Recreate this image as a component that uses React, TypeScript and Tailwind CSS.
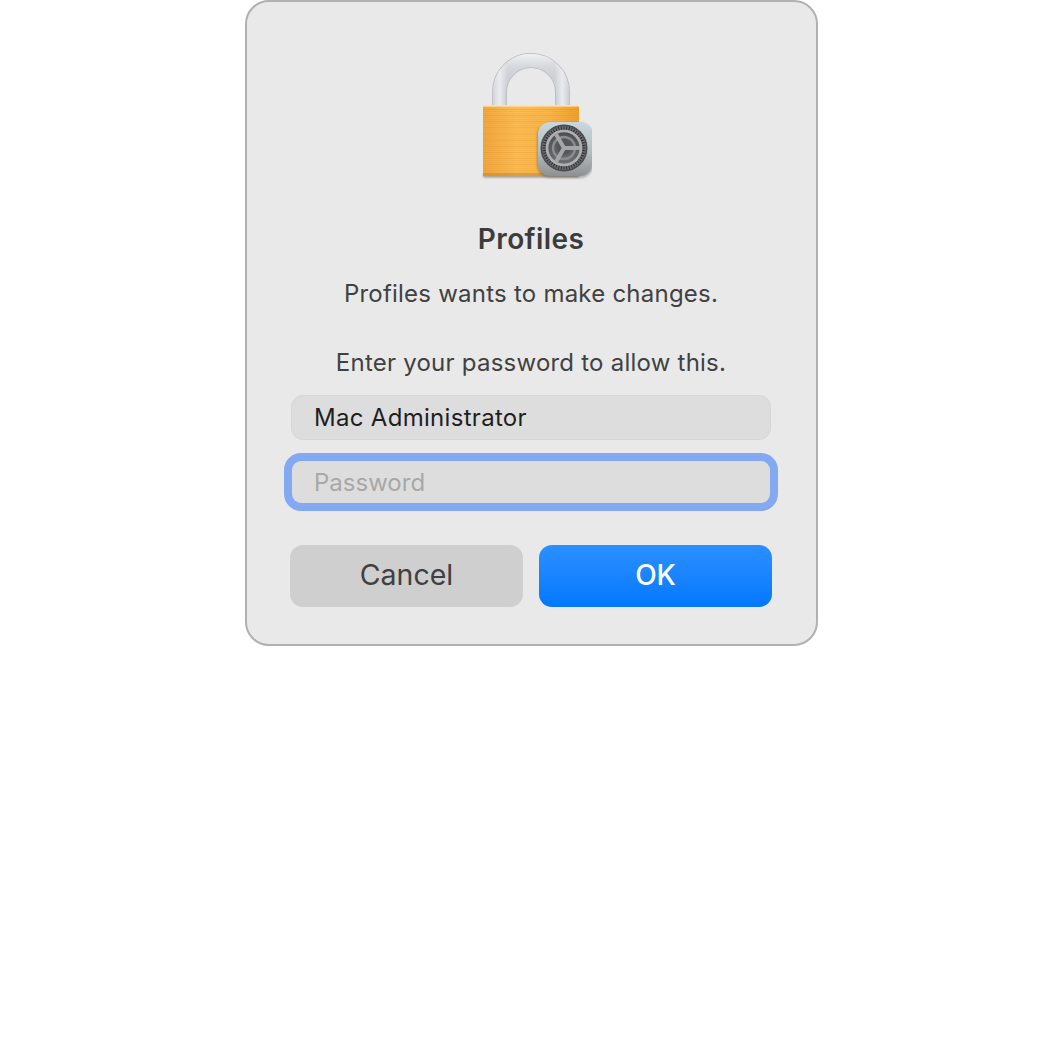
function LockIcon() {
  const teeth = Array.from({ length: 48 }, (_, i) => i * 7.5);
  return (
    <svg width="122" height="135" viewBox="-2 0 122 135" className="block">
      <defs>
        <linearGradient id="shackle" gradientUnits="userSpaceOnUse" x1="20" y1="0" x2="98" y2="0">
          <stop offset="0" stopColor="#cfd1d5" />
          <stop offset="0.1" stopColor="#eceef1" />
          <stop offset="0.2" stopColor="#c3c6cc" />
          <stop offset="0.8" stopColor="#c3c6cc" />
          <stop offset="0.9" stopColor="#eceef1" />
          <stop offset="1" stopColor="#c6c9ce" />
        </linearGradient>
        <linearGradient id="shackleTop" gradientUnits="userSpaceOnUse" x1="0" y1="3" x2="0" y2="55">
          <stop offset="0" stopColor="#f9f9fa" stopOpacity="0.9" />
          <stop offset="0.3" stopColor="#e8e9eb" stopOpacity="0.45" />
          <stop offset="1" stopColor="#d5d7da" stopOpacity="0" />
        </linearGradient>
        <linearGradient id="body" x1="0" y1="0" x2="1" y2="0">
          <stop offset="0" stopColor="#f2a73d" />
          <stop offset="0.35" stopColor="#fdbd55" />
          <stop offset="0.7" stopColor="#fab548" />
          <stop offset="1" stopColor="#ee9f30" />
        </linearGradient>
        <linearGradient id="badge" x1="0" y1="0" x2="0" y2="1">
          <stop offset="0" stopColor="#c8d8dc" />
          <stop offset="0.55" stopColor="#b4bdc0" />
          <stop offset="1" stopColor="#8f9192" />
        </linearGradient>
        <linearGradient id="disc" x1="0" y1="0" x2="0" y2="1">
          <stop offset="0" stopColor="#4b4d50" />
          <stop offset="1" stopColor="#6d6f72" />
        </linearGradient>
        <filter id="soft" x="-10%" y="-10%" width="120%" height="120%">
          <feGaussianBlur stdDeviation="0.4" />
        </filter>
        <filter id="drop" x="-20%" y="-20%" width="140%" height="140%">
          <feGaussianBlur stdDeviation="1.2" />
        </filter>
      </defs>
      <g filter="url(#soft)">
        <path d="M27.5 56V42A31.5 31.5 0 0 1 90.5 42V56" fill="none" stroke="#b6b8bd" strokeWidth="15" />
        <path d="M27.5 56V42A31.5 31.5 0 0 1 90.5 42V56" fill="none" stroke="url(#shackle)" strokeWidth="13.6" />
        <path d="M27.5 56V42A31.5 31.5 0 0 1 90.5 42V56" fill="none" stroke="url(#shackleTop)" strokeWidth="13.6" />
        <rect x="11" y="124" width="96" height="3.5" rx="1.5" fill="#5b4a2c" opacity="0.5" filter="url(#drop)" />
        <rect x="11" y="55" width="96" height="71" rx="2" fill="url(#body)" />
        <rect x="11" y="55" width="96" height="1.6" fill="#fde4ae" />
        {Array.from({ length: 33 }, (_, i) => (
          <rect key={i} x="11" y={59 + i * 2.05} width="96" height="0.8" fill="#d98f2a" opacity={i % 3 === 0 ? 0.42 : 0.24} />
        ))}
        <rect x="11" y="123" width="96" height="3" fill="#b87f2b" opacity="0.45" />
        <rect x="65" y="73" width="56" height="55" rx="13" fill="#3d3d3d" opacity="0.35" filter="url(#drop)" />
        <rect x="66" y="72" width="54" height="54" rx="12" fill="url(#badge)" />
        <circle cx="92" cy="98" r="23.5" fill="#48494c" />
        <circle cx="92" cy="98" r="22" fill="#6c6e71" />
        <g stroke="#2c2e30" strokeWidth="1">
          {teeth.map((a) => (
            <line key={a} x1="92" y1="76.5" x2="92" y2="80.5" transform={`rotate(${a} 92 98)`} />
          ))}
        </g>
        <circle cx="92" cy="98" r="17" fill="url(#disc)" stroke="#aeb0b2" strokeWidth="2.6" />
        <circle cx="92" cy="98" r="11" fill="none" stroke="#8a8c8e" strokeWidth="2.4" />
        <circle cx="92" cy="98" r="7" fill="#55575a" />
        <g transform="rotate(-30 92 98)" stroke="#a4a6a8" strokeWidth="4">
          <line x1="92" y1="98" x2="92" y2="82" />
          <line x1="92" y1="98" x2="78.1" y2="106" />
          <line x1="92" y1="98" x2="105.9" y2="106" />
        </g>
      </g>
    </svg>
  );
}

export default function App() {
  return (
    <div className="min-h-screen bg-white font-['Inter','Liberation_Sans',sans-serif] antialiased">
      <div className="ml-[245px] flex h-[646px] w-[573px] flex-col items-center rounded-[24px] border-2 border-[#b1b1b1] bg-[#e9e9e9] pt-[48px] pr-[44px] pl-[43px]">
        <LockIcon />
        <h1 className="mt-[37px] text-[28px] leading-[34px] font-semibold tracking-[0.4px] text-[#3c3c3c]">Profiles</h1>
        <p className="mt-[21px] text-[24px] leading-[34px] tracking-[0.23px] text-[#414141]">Profiles wants to make changes.</p>
        <p className="mt-[35px] text-[24px] leading-[34px] tracking-[0.23px] text-[#414141]">Enter your password to allow this.</p>
        <input
          readOnly
          value="Mac Administrator"
          className="mt-[15px] h-[45px] w-[480px] rounded-[12px] border border-[#d6d6d6] bg-[#dddddd] pl-[22px] text-[24px] tracking-[0.3px] text-[#1f1f1f] outline-none"
        />
        <input
          readOnly
          placeholder="Password"
          className="mt-[21px] h-[42px] w-[478px] rounded-[9px] bg-[#dddddd] pl-[22px] text-[24px] text-[#1f1f1f] ring-[8px] ring-[#82a9f1] outline-none placeholder:text-[#a8a8a8]"
        />
        <div className="mt-[42px] flex w-full justify-between">
          <button className="h-[62px] w-[233px] rounded-[13px] bg-[#cfcfcf] pb-[2px] text-[28.5px] text-[#404040]">Cancel</button>
          <button className="h-[62px] w-[233px] rounded-[13px] bg-gradient-to-b from-[#2a90ff] to-[#0078ff] pb-[2px] text-[28px] font-medium text-white">OK</button>
        </div>
      </div>
    </div>
  );
}
